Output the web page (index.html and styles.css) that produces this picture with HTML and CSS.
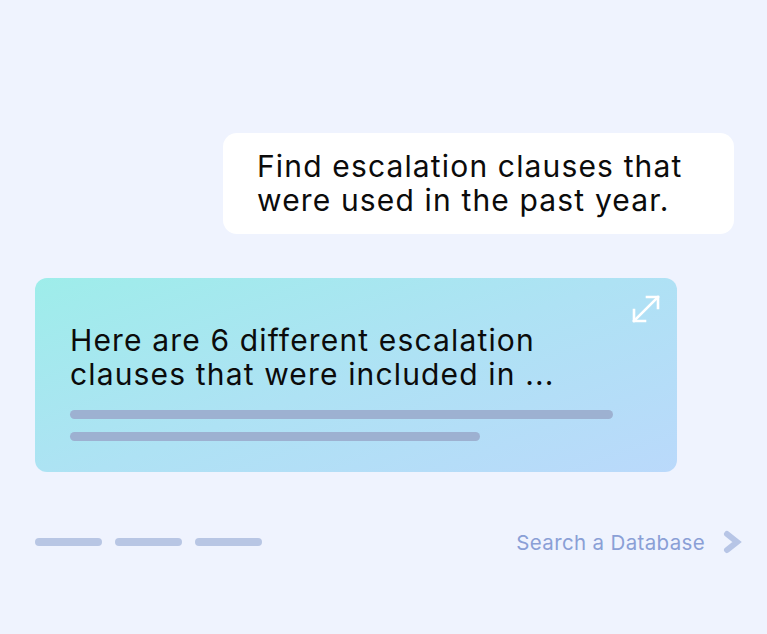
FILE: index.html
```html
<!DOCTYPE html>
<html lang="en">
<head>
<meta charset="utf-8">
<link rel="stylesheet" href="styles.css">
</head>
<body>
<main class="chat">
  <div class="bubble">Find escalation clauses that were used in the past year.</div>
  <section class="card">
    <svg class="expand" viewBox="0 0 32 32" width="32" height="32" fill="none" stroke="#fff" stroke-width="2.6" stroke-linecap="square">
      <path d="M4 28 L28 4"/>
      <path d="M17 4 H28 V15"/>
      <path d="M4 17 V28 H15"/>
    </svg>
    <p class="answer">Here are 6 different escalation clauses that were included in ...</p>
    <div class="line line-long"></div>
    <div class="line line-short"></div>
  </section>
  <footer class="footer">
    <div class="dashes">
      <span class="dash"></span><span class="dash"></span><span class="dash"></span>
    </div>
    <div class="action">
      <span class="action-text">Search a Database</span>
      <svg class="chev" viewBox="0 0 20 24" width="20" height="24" fill="none" stroke="#b7c5e6" stroke-width="6" stroke-linejoin="miter" stroke-linecap="round">
        <path d="M4 4 L14 12 L4 20"/>
      </svg>
    </div>
  </footer>
</main>
</body>
</html>
```

FILE: styles.css
```css
html, body {
  margin: 0;
  padding: 0;
}
body {
  background: #eff3fe;
  font-family: Inter, "Noto Sans", "Liberation Sans", sans-serif;
  width: 767px;
  height: 634px;
  overflow: hidden;
}
.chat {
  padding: 133px 24px 0 35px;
  display: flex;
  flex-direction: column;
}
.bubble {
  margin-left: 188px;
  width: 511px;
  box-sizing: border-box;
  background: #ffffff;
  border-radius: 14px;
  padding: 16px 20px 17px 34px;
  font-size: 30px;
  line-height: 34px;
  color: #0b0b0b;
  letter-spacing: 1.15px;
}
.card {
  position: relative;
  margin-top: 44px;
  width: 642px;
  box-sizing: border-box;
  border-radius: 12px;
  background: linear-gradient(160deg, #9eedea 0%, #aee2f4 50%, #bad9fb 100%);
  padding: 45px 64px 31px 35px;
}
.expand {
  position: absolute;
  top: 15px;
  right: 15px;
}
.answer {
  margin: 0;
  font-size: 30px;
  line-height: 34px;
  color: #0b0b0b;
  letter-spacing: 1.15px;
  width: 530px;
}
.line {
  height: 9px;
  border-radius: 5px;
  background: #9db1d1;
}
.line-long {
  margin-top: 19px;
  width: 543px;
}
.line-short {
  margin-top: 13px;
  width: 410px;
}
.footer {
  margin-top: 58px;
  display: flex;
  align-items: center;
  justify-content: space-between;
  height: 24px;
}
.dashes {
  display: flex;
  gap: 13px;
}
.dash {
  width: 67px;
  height: 8px;
  border-radius: 4px;
  background: #b8c6e4;
}
.action {
  display: flex;
  align-items: center;
  gap: 18px;
}
.action-text {
  font-size: 20.5px;
  letter-spacing: 0.35px;
  color: #8a9fd6;
}
.chev {
  display: block;
}
```
